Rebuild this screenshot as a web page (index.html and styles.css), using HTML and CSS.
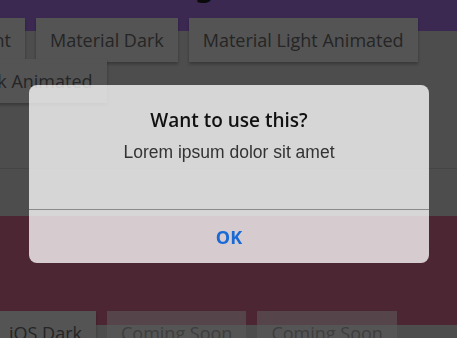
FILE: index.html
```html
<!DOCTYPE html>
<html lang="en">
<head>
<meta charset="utf-8">
<title>Dialog Themes</title>
<link rel="stylesheet" href="styles.css">
</head>
<body>
<header class="header">
  <h1 class="title">Dialog Themes</h1>
</header>
<section class="section-gray">
  <div class="row row-one">
    <button class="btn">Material Light</button>
    <button class="btn">Material Dark</button>
    <button class="btn">Material Light Animated</button>
  </div>
  <div class="row row-two">
    <button class="btn">Material Dark Animated</button>
  </div>
</section>
<section class="section-gray-lower"></section>
<div class="lower">
  <section class="section-maroon"></section>
  <section class="section-bottom">
    <div class="row row-three">
      <button class="btn">iOS Dark</button>
      <button class="btn btn-disabled">Coming Soon</button>
      <button class="btn btn-disabled">Coming Soon</button>
    </div>
  </section>
</div>

<div class="dialog">
  <div class="dialog-body">
    <h2 class="dialog-title">Want to use this?</h2>
    <p class="dialog-text">Lorem ipsum dolor sit amet</p>
  </div>
  <div class="dialog-actions">
    <span class="dialog-ok">OK</span>
  </div>
</div>
</body>
</html>
```
FILE: styles.css
```css
html, body {
  margin: 0;
  padding: 0;
}
body {
  background: #4d4d4d;
  width: 457px;
  height: 338px;
  overflow: hidden;
  font-family: "Open Sans", "Noto Sans", sans-serif;
}
.header {
  height: 31px;
  background: #3b2952;
  overflow: hidden;
  text-align: center;
}
.title {
  margin: -35px 0 0 0;
  font-family: "Noto Sans", sans-serif;
  font-weight: 700;
  font-size: 30px;
  line-height: 40px;
  color: #0a0a0a;
}
.section-gray {
  display: flow-root;
  height: 137px;
  border-bottom: 1px solid #454545;
}
.section-gray-lower {
  height: 47px;
}
.lower {
  height: 122px;
  overflow: hidden;
}
.section-maroon {
  height: 109px;
  background: #4d2633;
}
.section-bottom {
  display: flow-root;
  height: 13px;
}
.row {
  display: flex;
  gap: 11px;
  white-space: nowrap;
}
.row-one {
  margin: -13px 0 0 -118px;
}
.row-two {
  margin: -3px 0 0 -121px;
}
.row-three {
  margin: -14px 0 0 -5px;
}
.btn {
  flex: none;
  margin: 0;
  border: 0;
  padding: 10px 14px;
  font-family: "Open Sans", "Noto Sans", sans-serif;
  font-size: 18px;
  line-height: 24px;
  color: #252525;
  background: #545454;
  box-shadow: 0 2px 3px rgba(0, 0, 0, 0.28);
}
.btn-disabled {
  background: rgba(92, 92, 92, 0.55);
  color: #3e3e3e;
  box-shadow: none;
}
.dialog {
  position: fixed;
  top: 85px;
  left: 29px;
  width: 400px;
  height: 178px;
  border-radius: 8px;
  overflow: hidden;
  background: rgba(255, 255, 255, 0.77);
  display: flex;
  flex-direction: column;
  text-align: center;
}
.dialog-body {
  height: 125px;
  box-sizing: border-box;
  padding-top: 23px;
  border-bottom: 1px solid #8a8a8a;
}
.dialog-title {
  margin: 0;
  font-family: "Open Sans", "Noto Sans", sans-serif;
  font-weight: 600;
  font-size: 19px;
  line-height: 24px;
  color: #111111;
}
.dialog-text {
  margin: 9px 0 0 0;
  font-family: "Liberation Sans", Arial, sans-serif;
  font-size: 17.5px;
  line-height: 22px;
  color: #333333;
}
.dialog-actions {
  flex: 1;
  display: flex;
  align-items: center;
  justify-content: center;
}
.dialog-ok {
  font-family: "Open Sans", "Noto Sans", sans-serif;
  font-weight: 700;
  font-size: 18px;
  color: #1a6ad6;
}
```
